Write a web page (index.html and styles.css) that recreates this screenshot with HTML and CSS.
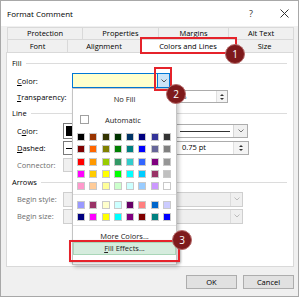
FILE: index.html
```html
<!DOCTYPE html>
<html>
<head>
<meta charset="utf-8">
<link rel="stylesheet" href="styles.css">
</head>
<body>
<div class="dialog">
  <div class="titlebar">
    <span class="title">Format Comment</span>
    <span class="tb-btn tb-help">?</span>
    <span class="tb-btn"><svg width="9" height="9" viewBox="0 0 9 9"><path d="M0.5 0.5 L8.5 8.5 M8.5 0.5 L0.5 8.5" stroke="#333" stroke-width="1"/></svg></span>
  </div>
  <div class="tabs">
    <div class="tabrow">
      <div class="tab t-prot">Protection</div>
      <div class="tab t-propt">Properties</div>
      <div class="tab t-marg">Margins</div>
      <div class="tab t-alt">Alt Text</div>
    </div>
    <div class="tabrow row2">
      <div class="tab t-font">Font</div>
      <div class="tab t-align">Alignment</div>
      <div class="tab t-col sel">Colors and Lines</div>
      <div class="tab t-size">Size</div>
    </div>
  </div>
  <div class="panel">
    <div class="sec first"><span>Fill</span></div>
    <div class="row r-fc">
      <span class="lbl lbl-f"><u>C</u>olor:</span>
      <div class="fillcombo"><span class="fdd"><svg width="6" height="4" viewBox="0 0 6 4"><path d="M0.5 0.5 L3 3 L5.5 0.5" fill="none" stroke="#555"/></svg></span></div>
    </div>
    <div class="row r-tr">
      <span class="lbl lbl-f"><u>T</u>ransparency:</span>
      <div class="slider"></div>
      <div class="spin tspin"><span class="val">0 %</span><span class="sb"><i class="up"></i><i class="dn"></i></span></div>
    </div>
    <div class="sec"><span>Line</span></div>
    <div class="row r-lc">
      <span class="lbl lbl-l">C<u>o</u>lor:</span>
      <div class="lcombo"><span class="blk"></span></div>
      <span class="gap"></span>
      <div class="stylecombo"><span class="sline"></span><span class="sdd"><svg width="6" height="4" viewBox="0 0 6 4"><path d="M0.5 0.5 L3 3 L5.5 0.5" fill="none" stroke="#777"/></svg></span></div>
    </div>
    <div class="row r-da">
      <span class="lbl lbl-l"><u>D</u>ashed:</span>
      <div class="dcombo"><span class="dline"></span></div>
      <span class="gap"></span>
      <div class="spin wspin"><span class="val">0.75 pt</span><span class="sb"><i class="up"></i><i class="dn"></i></span></div>
    </div>
    <div class="row r-co">
      <span class="lbl lbl-l dis">Connector:</span>
      <div class="discombo"></div>
    </div>
    <div class="sec"><span>Arrows</span></div>
    <div class="row r-bs">
      <span class="lbl lbl-l dis">Begin style:</span>
      <div class="discombo"></div>
      <span class="gap"></span>
      <div class="discombo2"><span class="ddd"><svg width="6" height="4" viewBox="0 0 6 4"><path d="M0.5 0.5 L3 3 L5.5 0.5" fill="none" stroke="#bbb"/></svg></span></div>
    </div>
    <div class="row r-bz">
      <span class="lbl lbl-l dis">Begin size:</span>
      <div class="discombo"></div>
      <span class="gap"></span>
      <div class="discombo2"><span class="ddd"><svg width="6" height="4" viewBox="0 0 6 4"><path d="M0.5 0.5 L3 3 L5.5 0.5" fill="none" stroke="#bbb"/></svg></span></div>
    </div>
  </div>
  <div class="footer">
    <div class="btn">OK</div>
    <div class="btn">Cancel</div>
  </div>

  <div class="popup">
    <div class="nofill">No Fill</div>
    <div class="auto"><span class="chk"></span><span class="autotxt">Automatic</span></div>
    <div class="grid">
      <span class="sw c000000"></span><span class="sw c993300"></span><span class="sw c333300"></span><span class="sw c003300"></span><span class="sw c003366"></span><span class="sw c000080"></span><span class="sw c333399"></span><span class="sw c333333"></span>
      <span class="sw c800000"></span><span class="sw cff6600"></span><span class="sw c808000"></span><span class="sw c008000"></span><span class="sw c008080"></span><span class="sw c0000ff"></span><span class="sw c666699"></span><span class="sw c808080"></span>
      <span class="sw cff0000"></span><span class="sw cff9900"></span><span class="sw c99cc00"></span><span class="sw c339966"></span><span class="sw c33cccc"></span><span class="sw c3366ff"></span><span class="sw c800080"></span><span class="sw c969696"></span>
      <span class="sw cff00ff"></span><span class="sw cffcc00"></span><span class="sw cffff00"></span><span class="sw c00ff00"></span><span class="sw c00ffff"></span><span class="sw c00ccff"></span><span class="sw c993366"></span><span class="sw cc0c0c0"></span>
      <span class="sw cff99cc"></span><span class="sw cffcc99"></span><span class="sw cffff99"></span><span class="sw cccffcc"></span><span class="sw cccffff"></span><span class="sw c99ccff"></span><span class="sw ccc99ff"></span><span class="sw cffffff"></span>
    </div>
    <div class="psep"></div>
    <div class="grid g2">
      <span class="sw c9999ff"></span><span class="sw c993366"></span><span class="sw cffffcc"></span><span class="sw cccffff"></span><span class="sw c660066"></span><span class="sw cff8080"></span><span class="sw c0066cc"></span><span class="sw cccccff"></span>
      <span class="sw c000080"></span><span class="sw cff00ff"></span><span class="sw cffff00"></span><span class="sw c00ffff"></span><span class="sw c800080"></span><span class="sw c800000"></span><span class="sw c008080"></span><span class="sw c0000ff"></span>
    </div>
    <div class="psep psep2"></div>
    <div class="more"><u>M</u>ore Colors...</div>
    <div class="fe"><u>F</u>ill Effects...</div>
  </div>

  <div class="mark m-tab"></div>
  <div class="mark m-dd"></div>
  <div class="mark m-fe"></div>
  <div class="badge b1">1</div>
  <div class="badge b2">2</div>
  <div class="badge b3">3</div>
</div>
</body>
</html>
```

FILE: styles.css
```css
* { box-sizing: border-box; }
body {
  margin: 0;
  font-family: "Open Sans", "Noto Sans", sans-serif;
  font-size: 7.5px;
  color: #000;
  background: #fff;
}
u { text-decoration: underline; text-underline-offset: 1px; }
.dialog {
  position: relative;
  width: 299px;
  height: 297px;
  border: 1px solid #a8a8a8;
  background: #f0f0f0;
  display: flex;
  flex-direction: column;
  overflow: hidden;
}
.titlebar {
  height: 25px;
  flex: none;
  background: #fff;
  display: flex;
  align-items: center;
  padding: 0 4px 0 6px;
  gap: 13px;
}
.title { flex: 1; font-size: 8px; }
.tb-btn {
  width: 20px;
  height: 20px;
  display: flex;
  align-items: center;
  justify-content: center;
  color: #333;
  font-size: 9px;
}
.tabs { margin: 1px 0 0 6px; width: 287px; flex: none; }
.tabrow { display: flex; }
.tab {
  height: 12px;
  line-height: 11px;
  text-align: center;
  border: 1px solid #d9d9d9;
  border-bottom: none;
  margin-right: -1px;
  background: #f0f0f0;
  white-space: nowrap;
}
.row2 .tab { height: 13px; line-height: 12px; }
.tab.sel { background: #fff; }
.t-prot { width: 76px; }
.t-propt { width: 77px; }
.t-marg { width: 71px; }
.t-alt { width: 66px; }
.t-font { width: 61px; }
.t-align { width: 74px; }
.t-col { width: 96px; }
.t-size { width: 59px; }

.panel {
  margin-left: 5px;
  width: 288px;
  height: 215px;
  flex: none;
  background: #fff;
  border: 1px solid #d9d9d9;
  display: flex;
  flex-direction: column;
  padding-top: 4px;
}
.sec {
  height: 12px;
  display: flex;
  align-items: center;
  padding: 0 6px 0 5px;
  margin-top: 4px;
  flex: none;
}
.sec.first { margin-top: 0; }
.sec::after {
  content: "";
  flex: 1;
  border-top: 1px solid #dcdcdc;
  margin-left: 4px;
}
.row {
  display: flex;
  align-items: center;
  padding-left: 10px;
  flex: none;
}
.lbl { white-space: nowrap; flex: none; }
.lbl-f { width: 55px; }
.lbl-l { width: 46px; }
.dis { color: #6d6d6d; }
.gap { width: 23px; flex: none; }

.r-fc { height: 15px; margin-top: 4px; }
.r-tr { height: 13px; margin-top: 2px; }
.r-lc { height: 16px; margin-top: 4px; }
.r-da { height: 14px; margin-top: 2px; }
.r-co { height: 14px; margin-top: 3px; }
.r-bs { height: 16px; margin-top: 3px; }
.r-bz { height: 16px; margin-top: 1px; }

.fillcombo {
  width: 98px;
  height: 15px;
  border: 1px solid #0078d7;
  background: #ffffcc;
  display: flex;
  justify-content: flex-end;
}
.fdd {
  width: 12px;
  background: #cce4f7;
  border-left: 1px solid #0078d7;
  display: flex;
  align-items: center;
  justify-content: center;
}
.slider { width: 96px; height: 13px; flex: none; }
.spin {
  height: 13px;
  border: 1px solid #acacac;
  background: #fff;
  display: flex;
  align-items: center;
  justify-content: space-between;
  flex: none;
}
.spin .val { padding-left: 5px; line-height: 1; }
.sb {
  width: 11px;
  height: 100%;
  display: flex;
  flex-direction: column;
  align-items: center;
  justify-content: center;
  gap: 2px;
  background: #f4f4f4;
  border-left: 1px solid #e0e0e0;
}
.sb i { display: block; width: 0; height: 0; border-left: 2px solid transparent; border-right: 2px solid transparent; }
.sb .up { border-bottom: 2px solid #333; }
.sb .dn { border-top: 2px solid #333; }
.tspin { width: 60px; }
.wspin { width: 73px; height: 14px; }
.wspin .sb { width: 15px; }

.lcombo {
  width: 90px;
  height: 16px;
  border: 1px solid #7a7a7a;
  padding: 2px;
  flex: none;
}
.blk { display: block; width: 30px; height: 100%; background: #000; }
.stylecombo {
  width: 72px;
  height: 14px;
  border: 1px solid #acacac;
  display: flex;
  align-items: center;
  flex: none;
}
.sline { flex: 1; height: 1px; background: #333; margin: 0 3px; }
.sdd, .ddd {
  width: 14px;
  height: 100%;
  display: flex;
  align-items: center;
  justify-content: center;
  background: #f0f0f0;
  border-left: 1px solid #d6d6d6;
}
.dcombo {
  width: 90px;
  height: 14px;
  border: 1px solid #7a7a7a;
  display: flex;
  align-items: center;
  padding: 0 2px;
  flex: none;
}
.dline { display: block; width: 40px; height: 1px; background: #000; }
.discombo {
  width: 90px;
  height: 14px;
  border: 1px solid #cfcfcf;
  background: #f0f0f0;
  flex: none;
}
.r-bs .discombo, .r-bz .discombo { height: 15px; }
.discombo2 {
  width: 67px;
  height: 15px;
  border: 1px solid #cfcfcf;
  background: #efefef;
  display: flex;
  justify-content: flex-end;
  flex: none;
}
.discombo2 .ddd { width: 12px; background: #efefef; border-left-color: #dcdcdc; }

.footer {
  display: flex;
  justify-content: flex-end;
  gap: 6px;
  padding: 8px 4px 0 0;
}
.btn {
  width: 51px;
  height: 14px;
  background: #e1e1e1;
  border: 1px solid #adadad;
  text-align: center;
  line-height: 12px;
}

.popup {
  position: absolute;
  left: 71px;
  top: 87px;
  width: 105px;
  height: 177px;
  background: #fff;
  border: 1px solid #c4c4c4;
  box-shadow: 2px 2px 4px rgba(0,0,0,0.22);
}
.nofill { height: 20px; line-height: 20px; text-align: center; color: #222; }
.auto { height: 21px; display: flex; align-items: center; padding-left: 7px; }
.chk { width: 9px; height: 9px; border: 1px solid #a0a0a0; background: #fff; flex: none; }
.autotxt { margin-left: 16px; color: #222; }
.grid {
  display: grid;
  grid-template-columns: repeat(8, 8px);
  column-gap: 4.3px;
  row-gap: 4.3px;
  padding-left: 4px;
  margin-top: 3px;
}
.g2 { margin-top: 0; }
.sw { width: 8px; height: 8px; border: 1px solid #c9c9c9; display: block; }
.psep { border-top: 1px solid #e3e3e3; margin: 4px 0 6px; }
.psep2 { margin: 4px 0 4px; }
.more { height: 12px; line-height: 12px; text-align: center; color: #222; }
.fe {
  height: 13px;
  line-height: 11px;
  text-align: center;
  background: #d5ecdd;
  border: 1px solid #a9d6b8;
  color: #222;
}

.mark { position: absolute; border: 2px solid #e5232b; }
.m-tab { left: 139px; top: 36px; width: 97px; height: 17px; }
.m-dd { left: 153px; top: 66px; width: 18px; height: 24px; }
.m-fe { left: 68px; top: 239px; width: 111px; height: 22px; box-shadow: 1px 1px 2px rgba(0,0,0,0.25); }
.badge {
  position: absolute;
  width: 20px;
  height: 20px;
  border-radius: 50%;
  background: #7e1a1c;
  border: 1px solid #b56a6a;
  color: #fff;
  font-size: 10px;
  line-height: 18px;
  text-align: center;
}
.b1 { left: 224px; top: 43px; }
.b2 { left: 165px; top: 83px; }
.b3 { left: 171px; top: 229px; }

.c000000 { background: #000000; } .c993300 { background: #993300; } .c333300 { background: #333300; } .c003300 { background: #003300; }
.c003366 { background: #003366; } .c000080 { background: #000080; } .c333399 { background: #333399; } .c333333 { background: #333333; }
.c800000 { background: #800000; } .cff6600 { background: #ff6600; } .c808000 { background: #808000; } .c008000 { background: #008000; }
.c008080 { background: #008080; } .c0000ff { background: #0000ff; } .c666699 { background: #666699; } .c808080 { background: #808080; }
.cff0000 { background: #ff0000; } .cff9900 { background: #ff9900; } .c99cc00 { background: #99cc00; } .c339966 { background: #339966; }
.c33cccc { background: #33cccc; } .c3366ff { background: #3366ff; } .c800080 { background: #800080; } .c969696 { background: #969696; }
.cff00ff { background: #ff00ff; } .cffcc00 { background: #ffcc00; } .cffff00 { background: #ffff00; } .c00ff00 { background: #00ff00; }
.c00ffff { background: #00ffff; } .c00ccff { background: #00ccff; } .c993366 { background: #993366; } .cc0c0c0 { background: #c0c0c0; }
.cff99cc { background: #ff99cc; } .cffcc99 { background: #ffcc99; } .cffff99 { background: #ffff99; } .cccffcc { background: #ccffcc; }
.cccffff { background: #ccffff; } .c99ccff { background: #99ccff; } .ccc99ff { background: #cc99ff; } .cffffff { background: #ffffff; }
.c9999ff { background: #9999ff; } .cffffcc { background: #ffffcc; } .c660066 { background: #660066; } .cff8080 { background: #ff8080; }
.c0066cc { background: #0066cc; } .cccccff { background: #ccccff; }
```
